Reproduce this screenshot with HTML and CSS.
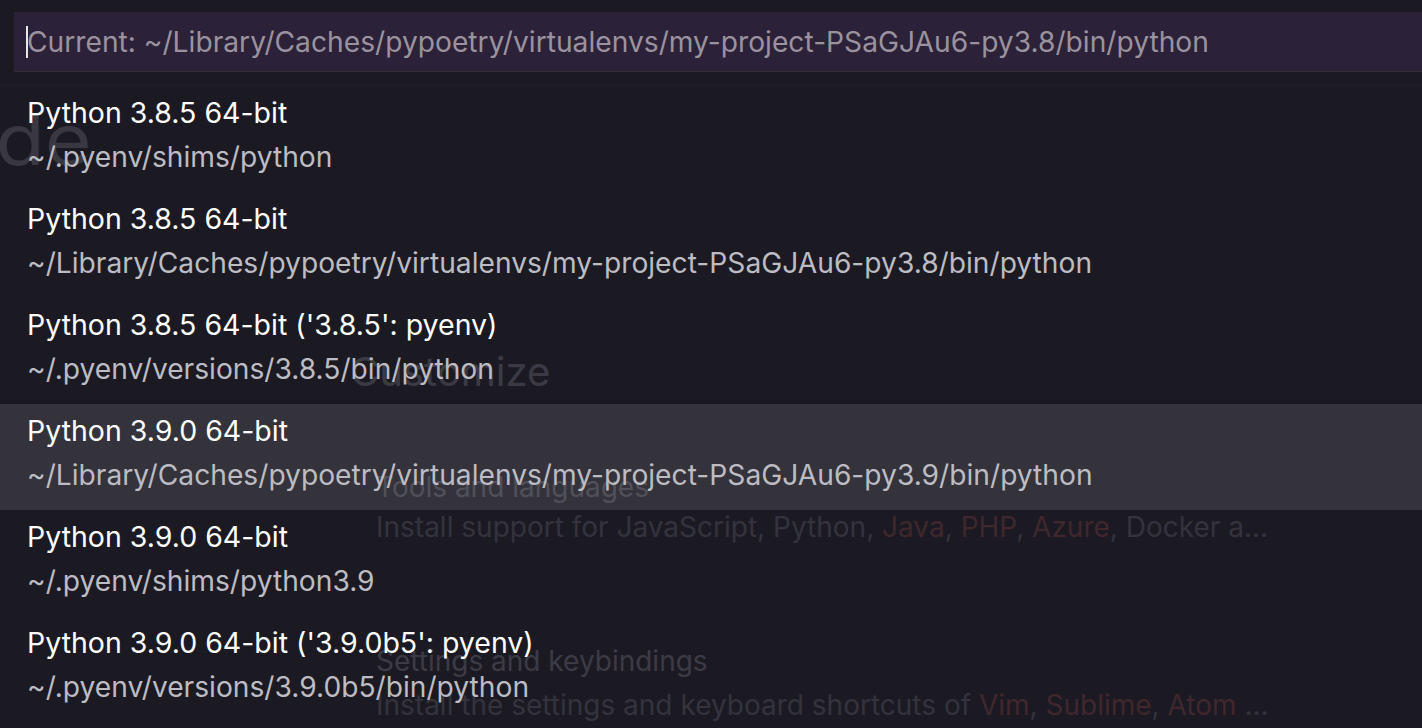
FILE: index.html
```html
<!DOCTYPE html>
<html>
<head>
<meta charset="utf-8">
<link rel="stylesheet" href="styles.css">
</head>
<body>
<div class="welcome">
  <div class="brand"><span class="brand-text">Code</span></div>
  <section class="customize">
    <h2 class="customize-title">Customize</h2>
    <div class="wel-item">
      <h3 class="wel-head">Tools and languages</h3>
      <p class="wel-desc">Install support for JavaScript, Python, <span class="hl">Java</span>, <span class="hl">PHP</span>, <span class="hl">Azure</span>, Docker a...</p>
    </div>
    <div class="wel-item">
      <h3 class="wel-head">Settings and keybindings</h3>
      <p class="wel-desc">Install the settings and keyboard shortcuts of <span class="hl">Vim</span>, <span class="hl">Sublime</span>, <span class="hl">Atom</span> ...</p>
    </div>
  </section>
</div>

<div class="quick-pick">
  <div class="qp-input"><span class="caret"></span><span class="placeholder">Current: ~/Library/Caches/pypoetry/virtualenvs/my-project-PSaGJAu6-py3.8/bin/python</span></div>
  <ul class="qp-list">
    <li class="qp-row"><div class="qp-label">Python 3.8.5 64-bit</div><div class="qp-detail">~/.pyenv/shims/python</div></li>
    <li class="qp-row"><div class="qp-label">Python 3.8.5 64-bit</div><div class="qp-detail">~/Library/Caches/pypoetry/virtualenvs/my-project-PSaGJAu6-py3.8/bin/python</div></li>
    <li class="qp-row"><div class="qp-label">Python 3.8.5 64-bit ('3.8.5': pyenv)</div><div class="qp-detail">~/.pyenv/versions/3.8.5/bin/python</div></li>
    <li class="qp-row selected"><div class="qp-label">Python 3.9.0 64-bit</div><div class="qp-detail">~/Library/Caches/pypoetry/virtualenvs/my-project-PSaGJAu6-py3.9/bin/python</div></li>
    <li class="qp-row"><div class="qp-label">Python 3.9.0 64-bit</div><div class="qp-detail">~/.pyenv/shims/python3.9</div></li>
    <li class="qp-row"><div class="qp-label">Python 3.9.0 64-bit ('3.9.0b5': pyenv)</div><div class="qp-detail">~/.pyenv/versions/3.9.0b5/bin/python</div></li>
  </ul>
</div>
</body>
</html>
```

FILE: styles.css
```css
* { box-sizing: border-box; }
html, body {
  margin: 0;
  width: 1422px;
  height: 728px;
  overflow: hidden;
  background: #1b1a23;
  font-family: Inter, "Noto Sans", sans-serif;
}
body { position: relative; }

/* background welcome page */
.welcome {
  padding-top: 100px;
  color: #3a3943;
}
.brand {
  width: 92px;
  height: 80px;
  display: flex;
  justify-content: flex-end;
  font-size: 70px;
  font-weight: 400;
  line-height: 80px;
  white-space: nowrap;
  color: #393842;
}
.brand-text {
  display: inline-block;
  transform: scaleX(1.15);
  transform-origin: right center;
}
.customize {
  margin-top: 167px;
  padding-left: 350px;
}
.customize-title {
  margin: 0;
  font-weight: 400;
  font-size: 40px;
  line-height: 50px;
  color: #3b3a44;
}
.wel-item {
  padding-left: 26px;
  margin-top: 70px;
}
.wel-item + .wel-item { margin-top: 94px; }
.wel-item + .wel-item .wel-desc { margin-top: 4px; }
.wel-head {
  margin: 0;
  font-weight: 400;
  font-size: 28px;
  line-height: 40px;
  color: #3c3b45;
}
.wel-desc {
  margin: 0;
  font-size: 28px;
  line-height: 40px;
  color: #34333d;
}
.hl { color: #40272b; }

/* quick pick overlay */
.quick-pick {
  position: absolute;
  top: 0;
  left: 0;
  right: 0;
  padding-top: 12px;
}
.qp-input {
  margin-left: 14px;
  height: 60px;
  background: #2b2239;
  border-bottom: 1px solid #2f2d38;
  display: flex;
  align-items: center;
  padding-left: 12px;
  font-size: 28.2px;
  color: #9a939f;
  white-space: nowrap;
}
.caret {
  width: 2px;
  height: 32px;
  background: #e8e8ea;
  margin-right: -1px;
}
.qp-list {
  list-style: none;
  margin: 12px 0 0;
  padding: 0;
  border-top: 2px solid #1f1e28;
}
.qp-row {
  height: 106px;
  padding: 5px 27px 0;
  white-space: nowrap;
}
.qp-row.selected { background: rgba(255,255,255,0.11); }
.qp-label {
  font-size: 28.5px;
  font-weight: 400;
  line-height: 44px;
  color: #ffffff;
}
.qp-detail {
  font-size: 28.2px;
  line-height: 44px;
  color: #bdbcc2;
}
```
